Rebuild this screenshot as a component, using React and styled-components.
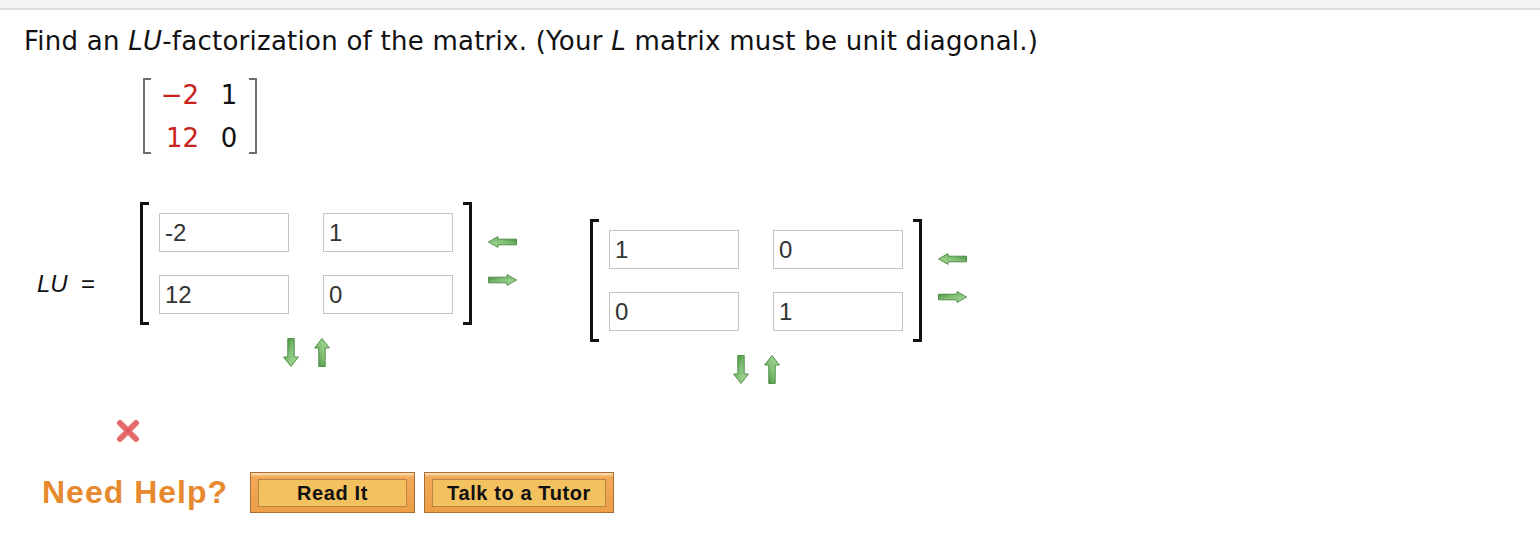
import React from "react";
import styled, { createGlobalStyle } from "styled-components";

const GlobalStyle = createGlobalStyle`
  html, body {
    margin: 0;
    padding: 0;
    background: #ffffff;
  }
  body {
    font-family: "DejaVu Sans", Verdana, sans-serif;
    color: #111;
  }
`;

const GIVEN = [
  [{ v: "\u22122", red: true }, { v: "1" }],
  [{ v: "12", red: true }, { v: "0" }]
];

const MATRICES = [
  { id: "L", values: ["-2", "1", "12", "0"], offset: 0 },
  { id: "U", values: ["1", "0", "0", "1"], offset: 17 }
];

const ARROW_PATHS = {
  left: "M0.5 6 L10 0.6 L10 3.2 L28.5 3.2 L28.5 8.8 L10 8.8 L10 11.4 Z",
  right: "M28.5 6 L19 0.6 L19 3.2 L0.5 3.2 L0.5 8.8 L19 8.8 L19 11.4 Z",
  down: "M8 28.5 L0.6 19 L4.8 19 L4.8 0.5 L11.2 0.5 L11.2 19 L15.4 19 Z",
  up: "M8 0.5 L0.6 10 L4.8 10 L4.8 28.5 L11.2 28.5 L11.2 10 L15.4 10 Z"
};

const GreenArrow = ({ dir }) => {
  const horizontal = dir === "left" || dir === "right";
  const w = horizontal ? 29 : 16;
  const h = horizontal ? 12 : 29;
  const gid = "g-" + dir;
  return (
    <svg width={w} height={h} viewBox={`0 0 ${w} ${h}`}>
      <defs>
        <linearGradient
          id={gid}
          x1={dir === "right" ? "0" : dir === "left" ? "1" : "0"}
          y1={dir === "down" ? "0" : dir === "up" ? "1" : "0"}
          x2={dir === "right" ? "1" : dir === "left" ? "0" : "1"}
          y2={dir === "down" ? "1" : dir === "up" ? "0" : "1"}
        >
          <stop offset="0" stopColor="#357f31" />
          <stop offset="0.45" stopColor="#7fbf73" />
          <stop offset="1" stopColor="#b2dea4" />
        </linearGradient>
      </defs>
      <path d={ARROW_PATHS[dir]} fill={`url(#${gid})`} stroke="#4f8f47" strokeWidth="1" strokeLinejoin="round" />
    </svg>
  );
};

const CrossMark = () => (
  <svg width="26" height="26" viewBox="0 0 26 26">
    <path d="M5 5 L21 21 M21 5 L5 21" stroke="#e46a6c" strokeWidth="6" strokeLinecap="round" />
    <circle cx="13" cy="13" r="2" fill="#d85558" />
  </svg>
);

export default function App() {
  return (
    <>
      <GlobalStyle />
      <Page>
        <TopBar />
        <Content>
          <Prompt>
            Find an <Var>LU</Var>-factorization of the matrix. (Your <Var>L</Var> matrix must be unit diagonal.)
          </Prompt>

          <GivenMatrix>
            {GIVEN.flat().map((cell, i) => (
              <GivenCell key={i} $red={cell.red} $first={i % 2 === 0}>
                {cell.v}
              </GivenCell>
            ))}
          </GivenMatrix>

          <AnswerRow>
            <LuLabel>
              <LuVar>LU</LuVar>&nbsp; =
            </LuLabel>
            {MATRICES.map(m => (
              <MatrixGroup key={m.id} $offset={m.offset}>
                <MatrixColumn>
                  <Bracketed>
                    {m.values.map((v, i) => (
                      <Cell key={m.id + i} defaultValue={v} readOnly />
                    ))}
                  </Bracketed>
                  <ColArrows>
                    <GreenArrow dir="down" />
                    <GreenArrow dir="up" />
                  </ColArrows>
                </MatrixColumn>
                <SideArrows>
                  <GreenArrow dir="left" />
                  <GreenArrow dir="right" />
                </SideArrows>
              </MatrixGroup>
            ))}
          </AnswerRow>

          <Status>
            <CrossMark />
          </Status>

          <HelpRow>
            <NeedHelp>Need Help?</NeedHelp>
            <HelpButton $w={165}>
              <HelpFace>Read It</HelpFace>
            </HelpButton>
            <HelpButton $w={190}>
              <HelpFace>Talk to a Tutor</HelpFace>
            </HelpButton>
          </HelpRow>
        </Content>
      </Page>
    </>
  );
}

const Page = styled.div`
  width: 100%;
  min-height: 556px;
  background: #fff;
`;

const TopBar = styled.div`
  height: 8px;
  background: #f4f4f4;
  border-bottom: 2px solid #dcdcdc;
`;

const Content = styled.div`
  padding: 0 0 0 24px;
  display: flex;
  flex-direction: column;
  align-items: flex-start;
`;

const Prompt = styled.div`
  margin-top: 16px;
  font-size: 26px;
  line-height: 30px;
  letter-spacing: 0.25px;
  color: #111;
  white-space: nowrap;
`;

const Var = styled.i`
  font-style: oblique;
`;

const GivenMatrix = styled.div`
  position: relative;
  margin: 22px 0 0 119px;
  height: 76px;
  box-sizing: border-box;
  padding: 0 12px 0 10px;
  display: grid;
  grid-template-columns: 46px 32px;
  grid-template-rows: 34px 34px;
  row-gap: 9px;
  column-gap: 14px;
  align-content: start;
  font-size: 26px;

  &::before,
  &::after {
    content: "";
    position: absolute;
    top: 0;
    bottom: 0;
    width: 6px;
    border: 2px solid #6f6f6f;
  }
  &::before {
    left: 0;
    border-right: none;
  }
  &::after {
    right: 0;
    border-left: none;
  }
`;

const GivenCell = styled.div`
  display: flex;
  align-items: center;
  justify-content: ${p => (p.$first ? "flex-end" : "center")};
  color: ${p => (p.$red ? "#c8231c" : "#111")};
  line-height: 34px;
`;

const AnswerRow = styled.div`
  margin-top: 48px;
  display: flex;
  align-items: flex-start;
`;

const LuLabel = styled.div`
  box-sizing: border-box;
  width: 116px;
  padding: 68px 0 0 13px;
  font-family: "Liberation Sans", Arial, sans-serif;
  font-size: 24px;
  line-height: 28px;
  color: #111;
`;

const LuVar = styled.i``;

const MatrixGroup = styled.div`
  display: flex;
  align-items: flex-start;
  margin-top: ${p => p.$offset}px;
  & + & {
    margin-left: 73px;
  }
`;

const MatrixColumn = styled.div`
  display: flex;
  flex-direction: column;
  align-items: center;
`;

const Bracketed = styled.div`
  position: relative;
  display: grid;
  grid-template-columns: 130px 130px;
  grid-auto-rows: 39px;
  column-gap: 34px;
  row-gap: 23px;
  padding: 11px 19px;

  &::before,
  &::after {
    content: "";
    position: absolute;
    top: 0;
    bottom: 0;
    width: 6px;
    border: 3px solid #111;
  }
  &::before {
    left: 0;
    border-right: none;
  }
  &::after {
    right: 0;
    border-left: none;
  }
`;

const Cell = styled.input`
  box-sizing: border-box;
  width: 130px;
  height: 39px;
  margin: 0;
  padding: 0 5px;
  border: 1px solid #c4c4c4;
  border-radius: 0;
  background: #fff;
  font-family: "Liberation Sans", Arial, sans-serif;
  font-size: 24px;
  color: #333;
  outline: none;
`;

const ColArrows = styled.div`
  margin-top: 13px;
  display: flex;
  gap: 15px;
`;

const SideArrows = styled.div`
  margin-left: 16px;
  padding-top: 34px;
  display: flex;
  flex-direction: column;
  gap: 26px;
`;

const Status = styled.div`
  margin: 34px 0 0 91px;
  width: 26px;
  height: 26px;
`;

const HelpRow = styled.div`
  margin: 28px 0 0 18px;
  display: flex;
  align-items: center;
`;

const NeedHelp = styled.div`
  margin-right: 22px;
  font-family: "Liberation Sans", Arial, sans-serif;
  font-weight: bold;
  font-size: 32px;
  letter-spacing: 1px;
  color: #e78a2f;
`;

const HelpButton = styled.button`
  box-sizing: border-box;
  width: ${p => p.$w}px;
  height: 41px;
  margin: 0 9px 0 0;
  padding: 6px 7px 5px;
  border: 1px solid #a96e34;
  border-radius: 0;
  background: linear-gradient(#fde2bd 0, #f2aa58 4px, #ec9d47 100%);
  cursor: pointer;
  display: flex;
`;

const HelpFace = styled.span`
  flex: 1;
  display: flex;
  align-items: center;
  justify-content: center;
  border: 1px solid #b98545;
  background: #f4c15f;
  font-family: "Liberation Sans", Arial, sans-serif;
  font-weight: bold;
  font-size: 20px;
  letter-spacing: 0.6px;
  color: #111;
`;
